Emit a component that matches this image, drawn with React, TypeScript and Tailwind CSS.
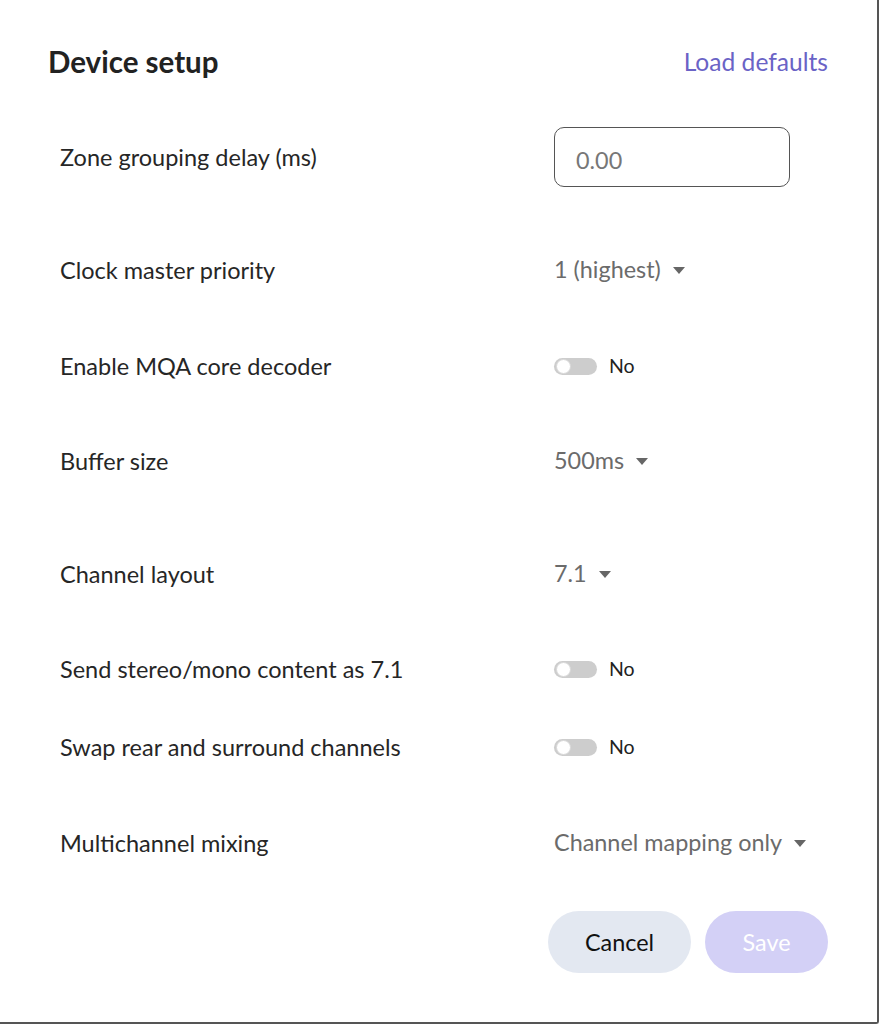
import { ReactNode } from "react";

function Caret() {
  return (
    <svg width="12" height="7" viewBox="0 0 12 7" className="ml-3 mt-[2px]">
      <path d="M0 0h12L6 7z" fill="#666" />
    </svg>
  );
}

function Select({ value }: { value: string }) {
  return (
    <div className="flex items-center text-[23.4px] text-[#6b6b6b]">
      {value}
      <Caret />
    </div>
  );
}

function Toggle() {
  return (
    <div className="flex items-center">
      <div className="relative h-[17px] w-[43px] rounded-full bg-[#cdcdcd]">
        <div className="absolute left-[2px] top-[1px] h-[15px] w-[15px] rounded-full border border-[#d8d8d8] bg-white" />
      </div>
      <span className="ml-3 text-[19.5px] text-[#222]">No</span>
    </div>
  );
}

function Row({ label, className, children }: { label: string; className: string; children: ReactNode }) {
  return (
    <div className={`flex items-center pl-[60px] ${className}`}>
      <div className="w-[494px] pt-[2px] text-[23.5px] text-[#262626]">{label}</div>
      {children}
    </div>
  );
}

export default function App() {
  return (
    <div
      className="h-[1024px] w-[879px] rounded-br-[3px] border-b-2 border-r-2 border-[#555] bg-white"
      style={{ fontFamily: "Lato, 'Open Sans', sans-serif" }}
    >
      <div className="flex h-[124px] items-center justify-between pl-[48px] pr-[49px]">
        <h1 className="text-[29.5px] font-bold text-[#222]">Device setup</h1>
        <a href="#" className="text-[24.6px] text-[#6a63c6]">
          Load defaults
        </a>
      </div>

      <Row label="Zone grouping delay (ms)" className="h-[66px]">
        <input
          type="text"
          placeholder="0.00"
          className="h-[60px] w-[236px] rounded-[10px] border-[1.5px] border-[#555] px-[21px] pt-[6px] text-[23.4px] text-[#222] placeholder-[#777] outline-none"
        />
      </Row>

      <Row label="Clock master priority" className="mt-[60px] h-[40px]">
        <Select value="1 (highest)" />
      </Row>

      <Row label="Enable MQA core decoder" className="mt-[56px] h-[40px]">
        <Toggle />
      </Row>

      <Row label="Buffer size" className="mt-[55px] h-[40px]">
        <Select value="500ms" />
      </Row>

      <Row label="Channel layout" className="mt-[73px] h-[40px]">
        <Select value="7.1" />
      </Row>

      <Row label="Send stereo/mono content as 7.1" className="mt-[55px] h-[40px]">
        <Toggle />
      </Row>

      <Row label="Swap rear and surround channels" className="mt-[38px] h-[40px]">
        <Toggle />
      </Row>

      <Row label="Multichannel mixing" className="mt-[56px] h-[40px]">
        <Select value="Channel mapping only" />
      </Row>

      <div className="mt-[48px] flex justify-end gap-[14px] pr-[49px]">
        <button className="h-[62px] w-[143px] rounded-full bg-[#e3e8f1] pt-[2px] text-[23.4px] text-[#111]">
          Cancel
        </button>
        <button disabled className="h-[62px] w-[123px] rounded-full bg-[#d3d0f6] pt-[2px] text-[23.4px] text-white">
          Save
        </button>
      </div>
    </div>
  );
}
